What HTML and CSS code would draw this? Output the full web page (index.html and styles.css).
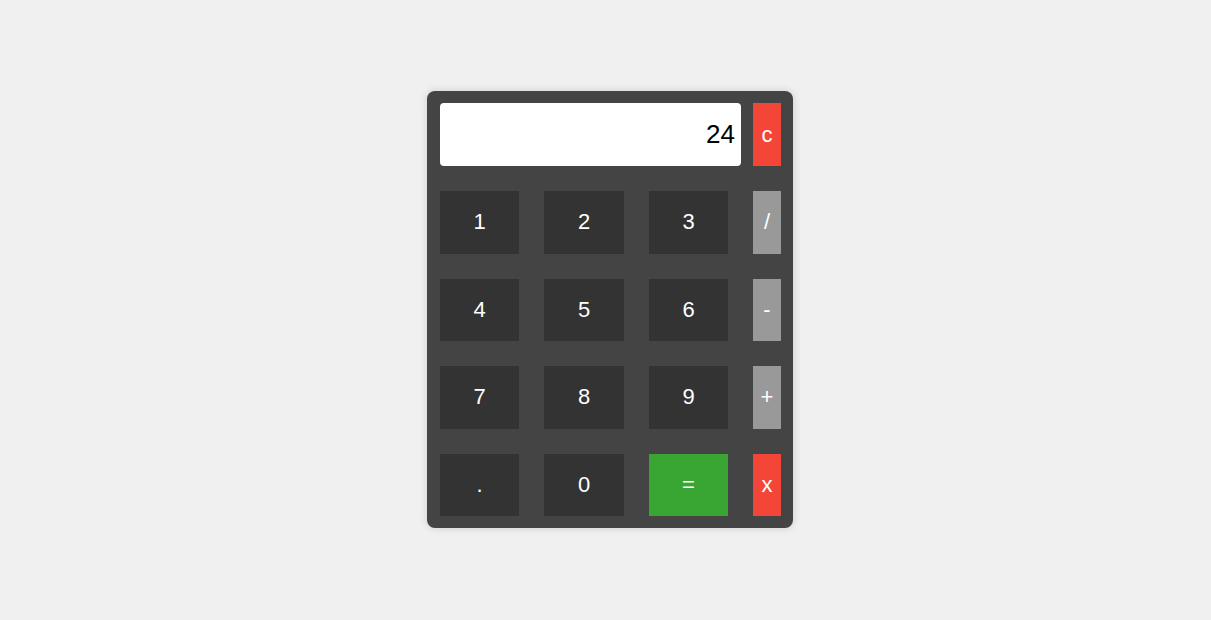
FILE: index.html
```html
<!DOCTYPE html>
<html lang="en">
<head>
<meta charset="utf-8">
<title>Calculator</title>
<link rel="stylesheet" href="styles.css">
</head>
<body>
  <div class="calculator">
    <div class="top-row">
      <div class="display">24</div>
      <button class="key key-clear">c</button>
    </div>
    <div class="keypad">
      <button class="key">1</button>
      <button class="key">2</button>
      <button class="key">3</button>
      <button class="key key-op">/</button>
      <button class="key">4</button>
      <button class="key">5</button>
      <button class="key">6</button>
      <button class="key key-op">-</button>
      <button class="key">7</button>
      <button class="key">8</button>
      <button class="key">9</button>
      <button class="key key-op">+</button>
      <button class="key">.</button>
      <button class="key">0</button>
      <button class="key key-equals">=</button>
      <button class="key key-clear">x</button>
    </div>
  </div>
</body>
</html>
```
FILE: styles.css
```css
html, body {
  margin: 0;
  padding: 0;
}

body {
  background: #f0f0f0;
  height: 620px;
  display: flex;
  justify-content: center;
  align-items: flex-start;
  padding: 91px 0 0 9px;
  box-sizing: border-box;
  font-family: "Liberation Sans", Arial, sans-serif;
}

.calculator {
  width: 366px;
  box-sizing: border-box;
  padding: 12px 12px 12px 13px;
  background: #444444;
  border-radius: 8px;
  box-shadow: 0 0 8px rgba(0, 0, 0, 0.15);
}

.top-row {
  display: flex;
  gap: 12px;
  height: 63px;
  margin-bottom: 25px;
}

.display {
  width: 301px;
  background: #ffffff;
  border-radius: 4px;
  color: #000;
  font-size: 26px;
  display: flex;
  align-items: center;
  justify-content: flex-end;
  padding-right: 6px;
  box-sizing: border-box;
}

.keypad {
  display: grid;
  grid-template-columns: 79px 80px 79px 28px;
  grid-auto-rows: 62.5px;
  column-gap: 25px;
  row-gap: 25px;
}

.key {
  border: none;
  margin: 0;
  padding: 0;
  background: #333333;
  color: #ffffff;
  font-family: inherit;
  font-size: 22px;
  cursor: pointer;
}

.top-row .key {
  width: 28px;
}

.key-op {
  background: #999999;
}

.key-clear {
  background: #f44539;
}

.key-equals {
  background: #39a634;
}
```
